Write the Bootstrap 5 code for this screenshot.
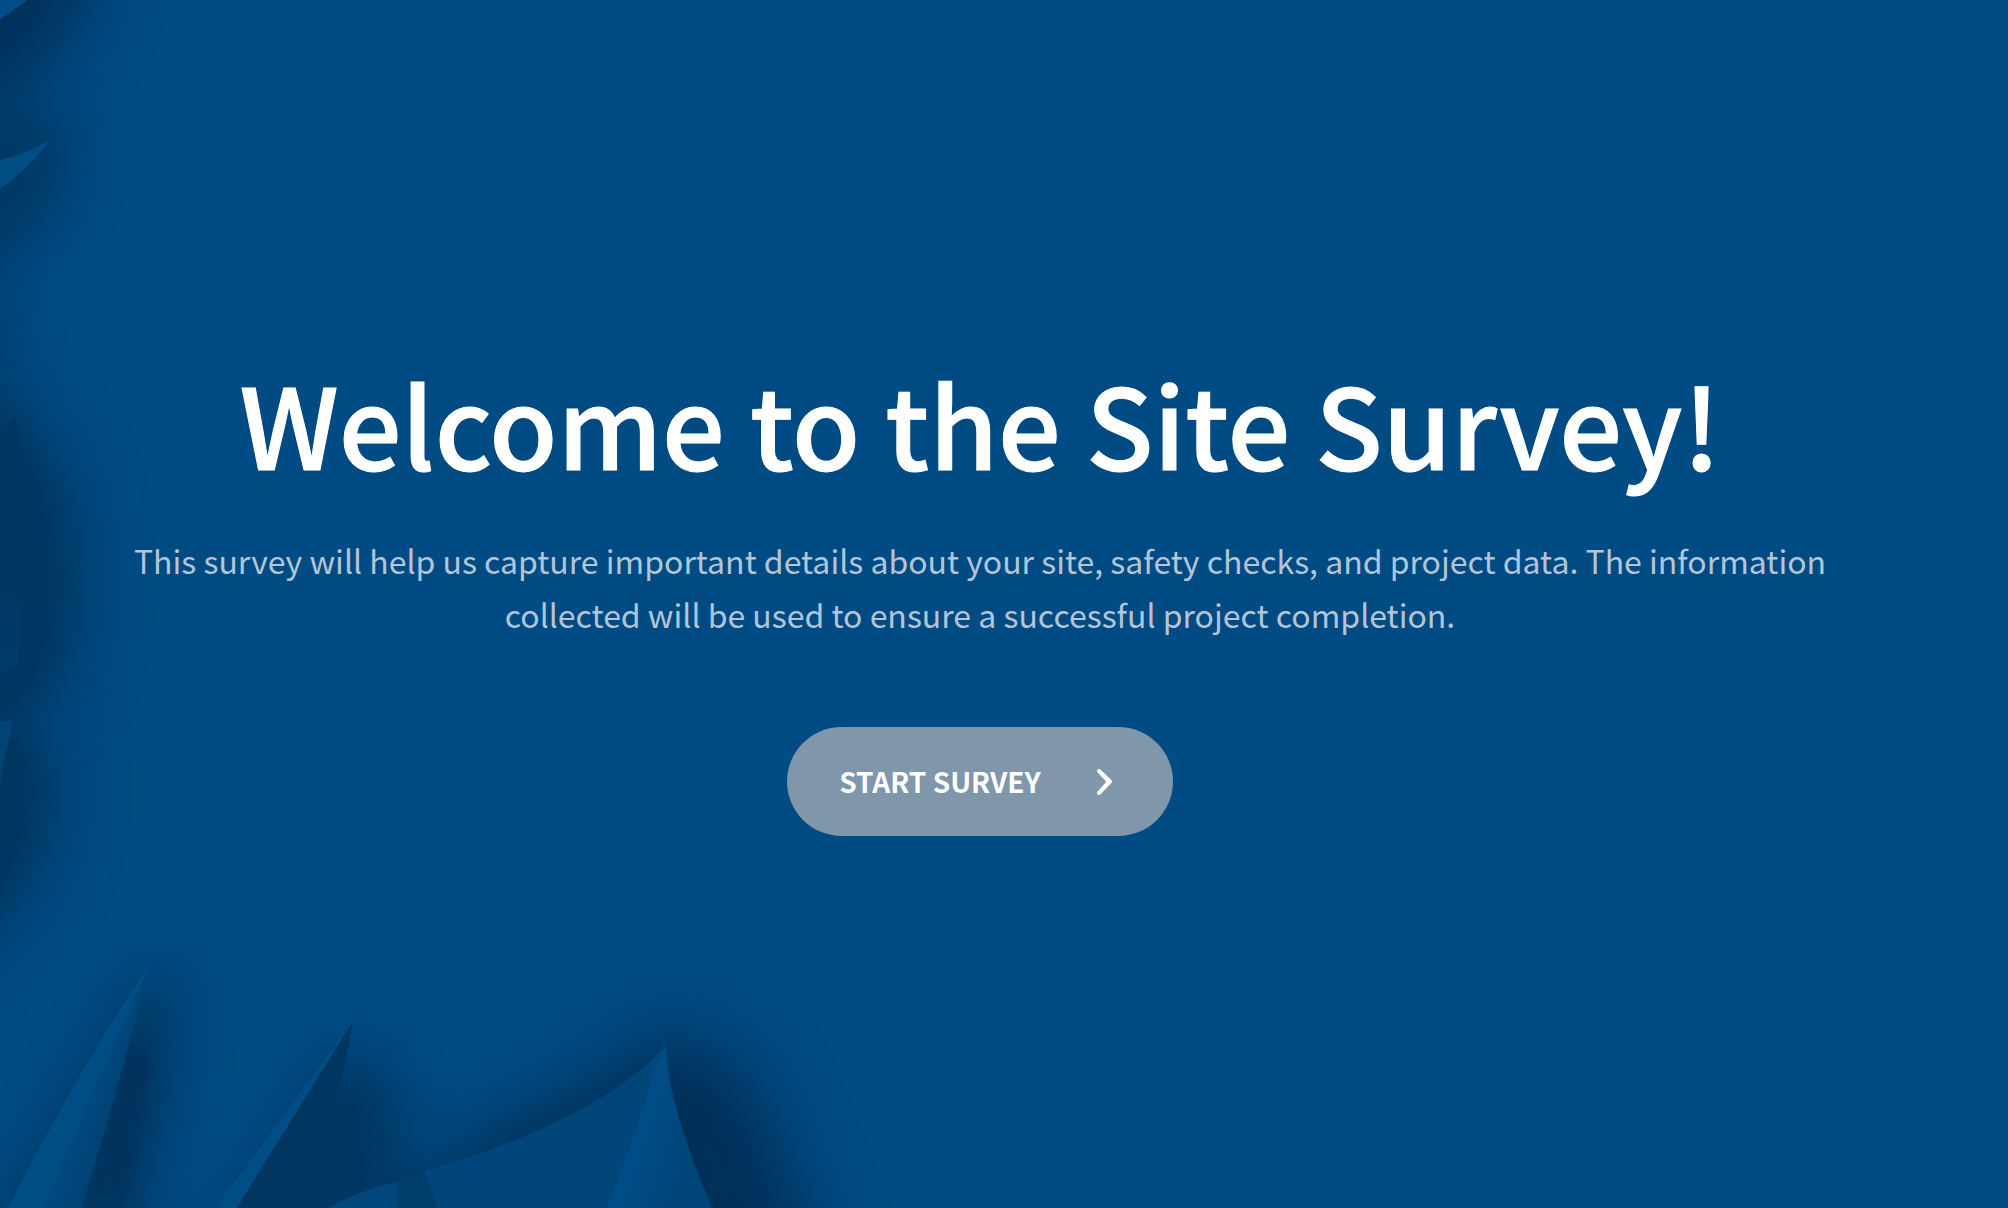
<!DOCTYPE html>
<html lang="en">
<head>
<meta charset="utf-8">
<meta name="viewport" content="width=device-width, initial-scale=1">
<title>Site Survey</title>
<link href="https://cdn.jsdelivr.net/npm/bootstrap@5.3.0/dist/css/bootstrap.min.css" rel="stylesheet">
<style>
  body {
    background: #004b84;
    font-family: "Noto Sans CJK SC", "Noto Sans", sans-serif;
  }
  .backdrop-art { z-index: 0; pointer-events: none; }
  .welcome { z-index: 1; padding: 0 104px 16px 56px; }
  .welcome-title {
    font-size: 111px;
    line-height: 132px;
    font-weight: 500;
    -webkit-text-stroke: 1px #fff;
    margin-bottom: 45px;
  }
  .welcome-text {
    font-size: 32px;
    line-height: 54px;
    max-width: 1720px;
    color: #b3c5d7;
    margin-bottom: 86px;
  }
  .btn-start {
    --bs-btn-color: #fff;
    --bs-btn-bg: #8096aa;
    --bs-btn-hover-color: #fff;
    --bs-btn-hover-bg: #90a4b6;
    --bs-btn-active-color: #fff;
    --bs-btn-active-bg: #73889c;
    --bs-btn-border-width: 0;
    --bs-btn-padding-x: 52px;
    --bs-btn-padding-y: 32px;
    --bs-btn-font-size: 28px;
    --bs-btn-line-height: 45px;
    --bs-btn-font-weight: 700;
    padding-right: 60px;
    gap: 54px;
  }
</style>
</head>
<body>
<svg class="backdrop-art position-absolute top-0 start-0 w-100 h-100" viewBox="0 0 2008 1208" preserveAspectRatio="xMinYMax slice" aria-hidden="true">
  <defs>
    <filter id="wide" x="-100%" y="-100%" width="300%" height="300%" color-interpolation-filters="sRGB"><feGaussianBlur stdDeviation="34"/></filter>
    <filter id="soft" x="-100%" y="-100%" width="300%" height="300%" color-interpolation-filters="sRGB"><feGaussianBlur stdDeviation="26"/></filter>
    <filter id="near" x="-100%" y="-100%" width="300%" height="300%" color-interpolation-filters="sRGB"><feGaussianBlur stdDeviation="10"/></filter>
    <linearGradient id="foldA" gradientUnits="userSpaceOnUse" x1="70" y1="1120" x2="112" y2="1135"><stop offset="0" stop-color="#004b84"/><stop offset="1" stop-color="#004170"/></linearGradient>
    <linearGradient id="foldC" gradientUnits="userSpaceOnUse" x1="640" y1="1140" x2="700" y2="1160"><stop offset="0" stop-color="#004c86"/><stop offset="1" stop-color="#004579"/></linearGradient>
    <linearGradient id="foldL" x1="0" y1="0" x2="0" y2="1"><stop offset="0" stop-color="#00365f"/><stop offset="1" stop-color="#003c6b"/></linearGradient>
  </defs>

  <!-- leaves on the left edge -->
  <path d="M-60 -80H106L80 20L24 90L-60 140Z" fill="#003159" filter="url(#wide)"/>
  <path d="M0 0H27L0 20Z" fill="#004d87"/>
  <path d="M-60 110L68 110L72 190L34 240L-60 310Z" fill="#003660" filter="url(#soft)" opacity=".8"/>
  <path d="M-60 280L5 280L15 420H-60Z" fill="#003b68" filter="url(#soft)" opacity=".8"/>
  <path d="M0 160Q28 154 52 138Q28 170 0 189Z" fill="#004c85"/>
  <path d="M-80 390L25 420L68 490L78 600L58 690L-80 760Z" fill="#00335a" filter="url(#wide)"/>
  <path d="M-80 720L30 720L56 780L38 870L-80 1000Z" fill="#00335a" filter="url(#wide)"/>
  <path d="M0 432L15 414L21 450C38 468 46 515 48 560C49 630 42 675 19 700L0 720Z" fill="#00365f" filter="url(#near)" opacity=".8"/>
  <path d="M0 435L15 414L21 450C38 468 46 515 48 560C49 630 42 675 19 700L0 710Z" fill="#00365f"/>
  <path d="M0 573L22 568Q22 620 17 668L0 672Z" fill="url(#foldL)"/>
  <path d="M0 785Q3 758 10 739L20 742Q34 800 12 864L0 905Z" fill="#00365f" filter="url(#near)"/>
  <path d="M0 785Q3 758 10 739L20 743Q34 800 12 864L0 895Z" fill="#00365f"/>
  <path d="M0 722L13 720L10 739Q3 758 0 785Z" fill="#004375"/>

  <!-- leaves along the bottom -->
  <path d="M-20 1240L140 975L182 975L176 1080L140 1240Z" fill="#00365f" filter="url(#soft)" opacity=".8"/>
  <path d="M82 1208L120 1070L138 1030L150 1060L122 1208Z" fill="#00325a" filter="url(#near)"/>
  <path d="M82 1230L120 1080L134 1078L134 1110L112 1230Z" fill="#00365f" filter="url(#near)"/>
  <path d="M8 1208C55 1115 105 1030 155 956C142 990 125 1065 82 1208Z" fill="url(#foldA)"/>
  <path d="M8 1208C55 1115 105 1030 155 956C120 1030 88 1100 44 1208Z" fill="#004c85"/>

  <path d="M210 1240L335 1055L380 1050L405 1110L410 1240Z" fill="#00365f" filter="url(#soft)" opacity=".85"/>
  <path d="M400 1200L475 1140C540 1110 620 1075 670 1025L750 1075L830 1280H400Z" fill="#003058" filter="url(#wide)"/>
  <path d="M290 1208L338 1090L360 1098L362 1208Z" fill="#00365f" filter="url(#near)"/>
  <path d="M215 1208L353 1021L237 1208Z" fill="#004c85"/>
  <path d="M237 1208L353 1021Q347 1060 335 1104L352 1125L352 1208Z" fill="#00365f"/>
  <path d="M328 1208Q352 1193 397 1182V1208Z" fill="#00477d"/>
  <path d="M397 1182L425 1171L437 1208H397Z" fill="#003e6c"/>

  <path d="M677 1105L720 1145L750 1208H712Z" fill="#00325a" filter="url(#near)"/>
  <path d="M425 1171C530 1140 620 1098 666 1045C668 1098 690 1155 712 1208H437Z" fill="#00467b"/>
  <path d="M666 1045C668 1098 690 1155 712 1208H607Q641 1120 655 1068Z" fill="url(#foldC)"/>
</svg>

<main class="welcome position-relative min-vh-100 d-flex flex-column justify-content-center align-items-center text-center">
  <h1 class="welcome-title text-white">Welcome to the Site Survey!</h1>
  <p class="welcome-text">This survey will help us capture important details about your site, safety checks, and project data. The information collected will be used to ensure a successful project completion.</p>
  <button type="button" class="btn btn-start rounded-pill d-inline-flex align-items-center">
    <span>START SURVEY</span>
    <svg width="18" height="28" viewBox="0 0 18 28" fill="none" stroke="#fff" stroke-width="4" stroke-linecap="round" stroke-linejoin="round" aria-hidden="true"><path d="M4 3L15 13.500L4 25M4 3L14 13.500L4 25"/></svg>
  </button>
</main>
<script src="https://cdn.jsdelivr.net/npm/bootstrap@5.3.0/dist/js/bootstrap.bundle.min.js"></script>
</body>
</html>
